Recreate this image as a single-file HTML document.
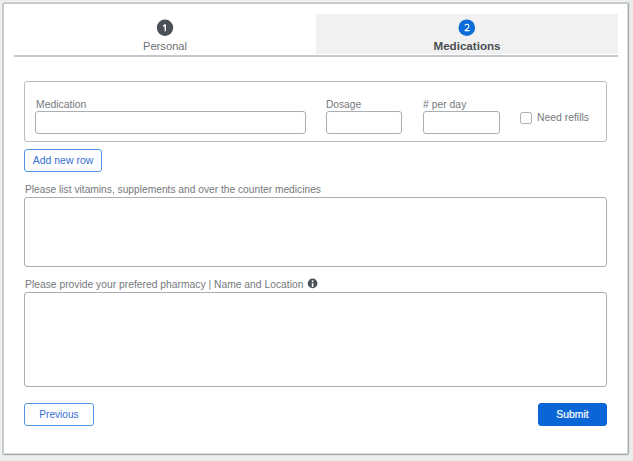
<!DOCTYPE html>
<html><head><meta charset="utf-8">
<style>
html,body{margin:0;padding:0;width:633px;height:461px;overflow:hidden;background:#ebeded;font-family:"Liberation Sans",sans-serif;}
.abs{position:absolute;}
#panel{position:absolute;left:2px;top:2px;width:624px;height:450px;border-top:2px solid #c7cbcd;border-left:2px solid #c5c9cc;border-right:1px solid #a8acb0;border-bottom:1px solid #a6aaad;box-shadow:-1px -1px 0 0 #f4f5f5,1px 1px 0 0 #e0e2e2,inset -1px -1px 0 0 #d6d9db;background:#fff;border-radius:2px;}
.tab{position:absolute;top:14px;height:40px;width:302px;}
#tab1{left:14px;}
#tab2{left:316px;background:#f1f1f1;}
#uline{position:absolute;left:14px;top:55px;width:604px;height:2px;background:#c5c8cb;}
.circ{position:absolute;width:17px;height:17px;border-radius:50%;color:#fff;font-size:9.5px;font-weight:bold;line-height:18px;text-align:center;}
.tabtxt{position:absolute;white-space:nowrap;text-align:center;width:302px;line-height:14px;}
.lbl{position:absolute;white-space:nowrap;font-size:10.2px;color:#75797d;line-height:12px;}
.inp{position:absolute;border:1px solid #aaaeb2;border-radius:3px;background:#fff;box-sizing:border-box;}
.btn{position:absolute;box-sizing:border-box;border:1px solid #5196e6;border-radius:3px;color:#3470d4;font-size:10.3px;text-align:center;white-space:nowrap;}
</style></head><body>
<div id="panel"></div>
<div class="tab" id="tab1"></div>
<div class="tab" id="tab2"></div>
<div id="uline"></div>
<svg class="abs" style="left:150px;top:10px;" width="30" height="30" viewBox="150 10 30 30"><circle cx="165" cy="27.7" r="8.2" fill="#4b5056"/><path d="M162.8 25.8 L164.6 24.2 L166 24.2 L166 31.3 L164.6 31.3 L164.6 26.3 L163.4 27.1 Z" fill="#fff"/></svg>
<svg class="abs" style="left:452px;top:10px;" width="30" height="30" viewBox="452 10 30 30"><circle cx="466.8" cy="27.7" r="8.3" fill="#0b6cd8"/><path d="M464.7 25.3 Q466.6 23.6 468.4 24.7 Q469.6 25.9 468.5 27.6 L465 30.6 L469.6 30.6" fill="none" stroke="#fff" stroke-width="1.1" stroke-linejoin="round"/></svg>
<div class="tabtxt" style="left:14px;top:39px;font-size:11.2px;color:#6d7175;">Personal</div>
<div class="tabtxt" style="left:316px;top:39px;font-size:11.6px;font-weight:bold;color:#4b4f54;">Medications</div>

<div class="inp" style="left:24px;top:81px;width:583px;height:61px;border-color:#b9bdc1;"></div>
<div class="lbl" style="left:36px;top:99px;font-size:10.4px;">Medication</div>
<div class="inp" style="left:35px;top:111px;width:271px;height:23px;"></div>
<div class="lbl" style="left:326px;top:99px;">Dosage</div>
<div class="inp" style="left:326px;top:111px;width:76px;height:23px;"></div>
<div class="lbl" style="left:423px;top:99px;font-size:10.4px;"># per day</div>
<div class="inp" style="left:423px;top:111px;width:77px;height:23px;"></div>
<div class="inp" style="left:520px;top:112px;width:12px;height:11.5px;border-color:#a9adb1;border-radius:2.5px;"></div>
<div class="lbl" style="left:537px;top:112px;font-size:10.4px;">Need refills</div>

<div class="btn" style="left:24px;top:149px;width:78px;height:23px;line-height:21px;font-size:10.5px;">Add new row</div>

<div class="lbl" style="left:25px;top:184px;font-size:10.22px;">Please list vitamins, supplements and over the counter medicines</div>
<div class="inp" style="left:24px;top:197px;width:583px;height:70px;"></div>

<div class="lbl" style="left:25px;top:279px;font-size:10.32px;">Please provide your prefered pharmacy | Name and Location</div>
<svg class="abs" style="left:300px;top:274px;" width="24" height="20" viewBox="0 0 24 20"><circle cx="12.6" cy="9.4" r="4.8" fill="#4b5056"/><rect x="11.8" y="6.4" width="1.6" height="1.7" fill="#fff"/><rect x="11.8" y="9.2" width="1.6" height="3.8" fill="#fff"/></svg>
<div class="inp" style="left:24px;top:292px;width:583px;height:95px;"></div>

<div class="btn" style="left:24px;top:403px;width:70px;height:23px;line-height:21px;font-size:10.1px;">Previous</div>
<div class="btn" style="left:538px;top:403px;width:69px;height:23px;line-height:21px;background:#0a66d6;border-color:#0a66d6;color:#fff;font-size:10.4px;-webkit-text-stroke:0.2px #fff;line-height:21px;">Submit</div>
</body></html>
